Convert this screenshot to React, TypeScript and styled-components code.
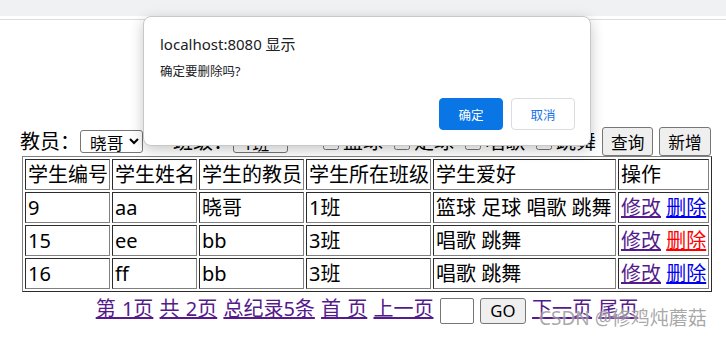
import React from 'react';
import styled, { createGlobalStyle } from 'styled-components';

const GlobalStyle = createGlobalStyle`
  html, body {
    margin: 0;
    padding: 0;
    background: #ffffff;
  }
  body {
    font-family: "Noto Sans", "Noto Sans CJK SC", sans-serif;
    color: #000;
  }
`;

const Screen = styled.div`
  position: relative;
  width: 726px;
  height: 339px;
  overflow: hidden;
  background: #fff;
`;

const TopBar = styled.div`
  height: 16px;
  background: #eff1f3;
`;

const TopRule = styled.div`
  height: 3px;
  border-bottom: 1px solid #dadce0;
`;

const Page = styled.div`
  padding: 107px 0 0 20px;
  font-size: 20px;
`;

const FilterRow = styled.div`
  display: flex;
  align-items: center;
  height: 29px;
  line-height: 27px;
  white-space: nowrap;
`;

const Label = styled.span<{ $gap?: number }>`
  margin-left: ${p => p.$gap || 0}px;
`;

const Select = styled.select<{ $width: number }>`
  width: ${p => p.$width}px;
  height: 23px;
  font-family: inherit;
  font-size: 16.67px;
  border: 1px solid #767676;
  border-radius: 3px;
  padding: 0 2px 0 5px;
  background: #fff;
  color: #000;
`;

const CheckGroup = styled.div`
  display: flex;
  align-items: center;
  margin-left: 30px;
`;

const CheckItem = styled.label`
  display: flex;
  align-items: center;
  margin-right: 6px;
`;

const Check = styled.input`
  width: 16px;
  height: 16px;
  margin: 0 4px 0 5px;
`;

const Button = styled.button<{ $gap?: number }>`
  height: 29px;
  margin-left: ${p => p.$gap || 0}px;
  padding: 0 8px;
  font-family: inherit;
  font-size: 16.67px;
  color: #000;
  background: #efefef;
  border: 1px solid #767676;
  border-radius: 3px;
`;

const Table = styled.table`
  margin-left: 2px;
  width: 690px;
  table-layout: fixed;
  border-collapse: separate;
  border-spacing: 2px;
  border: 1px outset grey;
`;

const Cell = styled.td`
  padding: 1px 2px;
  line-height: 27px;
  border: 1px inset grey;
  white-space: nowrap;
  overflow: hidden;
`;

const Link = styled.a<{ $tone?: 'visited' | 'link' | 'active' }>`
  color: ${p => (p.$tone === 'link' ? '#0000ee' : p.$tone === 'active' ? '#ff0000' : '#551a8b')};
  text-decoration: underline;
  cursor: pointer;
`;

const Pager = styled.div`
  width: 690px;
  margin-left: 2px;
  padding-top: 3px;
  text-align: center;
  line-height: 28px;
  word-spacing: 1px;
  white-space: nowrap;
`;

const PageInput = styled.input`
  box-sizing: border-box;
  width: 34px;
  height: 26px;
  vertical-align: middle;
  border: 1px solid #767676;
  border-radius: 2px;
`;

const GoButton = styled.button`
  box-sizing: border-box;
  width: 46px;
  height: 26px;
  vertical-align: middle;
  font-family: inherit;
  font-size: 16.67px;
  color: #000;
  background: #efefef;
  border: 1px solid #767676;
  border-radius: 3px;
  padding: 0;
`;

const Watermark = styled.div`
  position: absolute;
  left: 539px;
  top: 306px;
  font-size: 19px;
  line-height: 24px;
  color: rgba(110, 110, 110, 0.6);
  text-shadow: 0 0 2px #fff;
  white-space: nowrap;
`;

// the browser's alert, laid over the page
const Dialog = styled.div`
  position: absolute;
  left: 143px;
  top: 16px;
  width: 448px;
  height: 130px;
  box-sizing: border-box;
  padding: 18px 15px 0 16px;
  background: #fff;
  border: 1px solid #c8c8c8;
  border-radius: 8px;
  box-shadow: 0 4px 14px rgba(0, 0, 0, 0.22);
`;

const DialogTitle = styled.div`
  font-size: 15px;
  line-height: 18px;
  color: #202124;
`;

const DialogText = styled.div`
  margin-top: 12px;
  font-size: 12.5px;
  line-height: 14px;
  color: #202124;
`;

const DialogActions = styled.div`
  display: flex;
  justify-content: flex-end;
  gap: 8px;
  margin-top: 19px;
`;

const DialogButton = styled.button<{ $primary?: boolean }>`
  width: 64px;
  height: 32px;
  font-family: inherit;
  font-size: 12.5px;
  border-radius: 4px;
  border: 1px solid ${p => (p.$primary ? '#0a76e6' : '#dadce0')};
  background: ${p => (p.$primary ? '#0a76e6' : '#fff')};
  color: ${p => (p.$primary ? '#fff' : '#1a73e8')};
`;

interface Student {
  id: string;
  name: string;
  teacher: string;
  clazz: string;
  hobby: string;
  deleteTone: 'link' | 'active';
}

const students: Student[] = [
  { id: '9', name: 'aa', teacher: '晓哥', clazz: '1班', hobby: '篮球 足球 唱歌 跳舞', deleteTone: 'link' },
  { id: '15', name: 'ee', teacher: 'bb', clazz: '3班', hobby: '唱歌 跳舞', deleteTone: 'active' },
  { id: '16', name: 'ff', teacher: 'bb', clazz: '3班', hobby: '唱歌 跳舞', deleteTone: 'link' },
];

const columns = [85, 85, 105, 125, 183, 91];
const headers = ['学生编号', '学生姓名', '学生的教员', '学生所在班级', '学生爱好', '操作'];
const hobbies = ['篮球', '足球', '唱歌', '跳舞'];

export default function App() {
  return (
    <Screen>
      <GlobalStyle />
      <TopBar />
      <TopRule />
      <Page>
        <FilterRow>
          <Label>教员：</Label>
          <Select $width={63} defaultValue="xg">
            <option value="xg">晓哥</option>
          </Select>
          <Label $gap={30}>班级：</Label>
          <Select $width={55} defaultValue="1">
            <option value="1">1班</option>
          </Select>
          <CheckGroup>
            {hobbies.map(h => (
              <CheckItem key={h}>
                <Check type="checkbox" />
                {h}
              </CheckItem>
            ))}
          </CheckGroup>
          <Button>查询</Button>
          <Button $gap={6}>新增</Button>
        </FilterRow>

        <Table>
          <colgroup>
            {columns.map((w, i) => (
              <col key={i} style={{ width: w }} />
            ))}
          </colgroup>
          <tbody>
            <tr>
              {headers.map(h => (
                <Cell key={h}>{h}</Cell>
              ))}
            </tr>
            {students.map(s => (
              <tr key={s.id}>
                <Cell>{s.id}</Cell>
                <Cell>{s.name}</Cell>
                <Cell>{s.teacher}</Cell>
                <Cell>{s.clazz}</Cell>
                <Cell>{s.hobby}</Cell>
                <Cell>
                  <Link $tone="visited">修改</Link> <Link $tone={s.deleteTone}>删除</Link>
                </Cell>
              </tr>
            ))}
          </tbody>
        </Table>

        <Pager>
          <Link>第 1页</Link> <Link>共 2页</Link> <Link>总纪录5条</Link> <Link>首 页</Link>{' '}
          <Link>上一页</Link> <PageInput type="text" /> <GoButton>GO</GoButton>{' '}
          <Link>下一页</Link> <Link>尾页</Link>
        </Pager>
      </Page>

      <Watermark>CSDN @修鸡炖蘑菇</Watermark>

      <Dialog>
        <DialogTitle>localhost:8080 显示</DialogTitle>
        <DialogText>确定要删除吗?</DialogText>
        <DialogActions>
          <DialogButton $primary>确定</DialogButton>
          <DialogButton>取消</DialogButton>
        </DialogActions>
      </Dialog>
    </Screen>
  );
}
